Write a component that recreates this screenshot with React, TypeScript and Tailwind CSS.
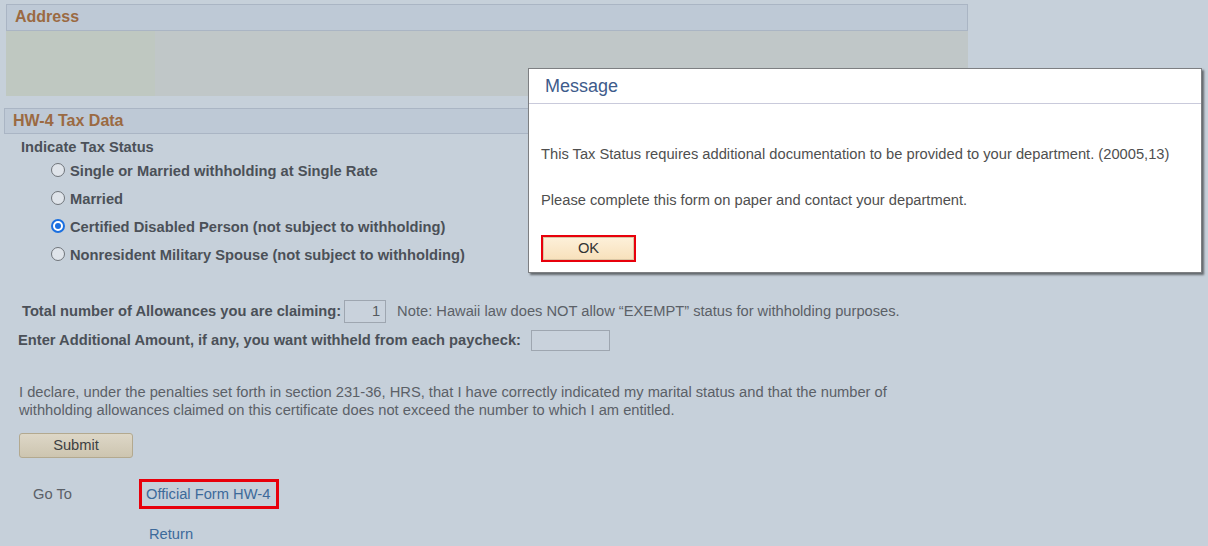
import React from "react";

const statuses = [
  { label: "Single or Married withholding at Single Rate", checked: false },
  { label: "Married", checked: false },
  { label: "Certified Disabled Person (not subject to withholding)", checked: true },
  { label: "Nonresident Military Spouse (not subject to withholding)", checked: false },
];

function Radio({ checked }: { checked: boolean }) {
  if (checked) {
    return (
      <span className="flex h-[14px] w-[14px] shrink-0 items-center justify-center rounded-full border-2 border-[#1a6fe0] bg-white">
        <span className="h-[6px] w-[6px] rounded-full bg-[#1a6fe0]" />
      </span>
    );
  }
  return <span className="block h-[14px] w-[14px] shrink-0 rounded-full border border-[#6f747a] bg-[#dfe4ea]" />;
}

export default function App() {
  return (
    <div className="relative h-[546px] w-[1208px] overflow-hidden bg-[#c6d0da] font-['Liberation_Sans',Arial,sans-serif] text-[14.7px] text-[#5b6067]">
      {/* Address section */}
      <div className="ml-[6px] w-[962px] pt-[4px]">
        <div className="h-[27px] border border-[#aab5c4] bg-[#bec9d6] px-[8px] text-[16px] font-bold leading-[24px] text-[#9b6a42]">
          Address
        </div>
        <div className="flex h-[65px] bg-[#c0c7c8]">
          <div className="w-[149px] bg-[#bfc8c1]" />
        </div>
      </div>

      {/* HW-4 Tax Data section */}
      <div className="ml-[4px] mt-[12px] h-[26px] w-[964px] border border-[#aab5c4] bg-[#bec9d6] px-[8px] text-[16px] font-bold leading-[23px] text-[#9b6a42]">
        HW-4 Tax Data
      </div>

      <div className="ml-[21px] mt-[4px] font-bold leading-[18px] text-[#4b5058]">Indicate Tax Status</div>
      <div className="ml-[51px] mt-[1px] flex flex-col">
        {statuses.map((s) => (
          <div key={s.label} className="flex h-[28px] items-center gap-[5px]">
            <span className="-mt-[3px] shrink-0">
              <Radio checked={s.checked} />
            </span>
            <span className="font-bold text-[#4b5058]">{s.label}</span>
          </div>
        ))}
      </div>

      <div className="ml-[22px] mt-[31px] flex h-[23px] items-center">
        <span className="font-bold text-[#4b5058]">Total number of Allowances you are claiming:</span>
        <div className="ml-[3px] h-[23px] w-[42px] border border-[#9ea6b0] bg-[#c9d2dc] pr-[5px] text-right leading-[21px] text-[#555a60]">
          1
        </div>
        <span className="ml-[11px]">Note: Hawaii law does NOT allow “EXEMPT” status for withholding purposes.</span>
      </div>

      <div className="ml-[18px] mt-[7px] flex h-[21px] items-center">
        <span className="font-bold text-[#4b5058]">Enter Additional Amount, if any, you want withheld from each paycheck:</span>
        <div className="ml-[10px] h-[21px] w-[79px] border border-[#9ea6b0] bg-[#c9d2dc]" />
      </div>

      <p className="ml-[19px] mt-[32px] w-[920px] leading-[18px]">
        I declare, under the penalties set forth in section 231-36, HRS, that I have correctly indicated my marital status and that the number of
        <br />
        withholding allowances claimed on this certificate does not exceed the number to which I am entitled.
      </p>

      <button className="ml-[19px] mt-[14px] h-[25px] w-[114px] rounded-[3px] border border-[#b3a98f] bg-gradient-to-b from-[#ddd7c7] to-[#cdc5b0] text-[14.7px] text-[#3d3f42]">
        Submit
      </button>

      <div className="ml-[33px] mt-[21px] flex h-[30px] items-center">
        <span className="w-[106px]">Go To</span>
        <a className="flex h-[30px] w-[140px] items-center border-[3px] border-[#e8000b] pl-[4px] text-[#3d6a9a]">
          Official Form HW-4
        </a>
      </div>
      <div className="ml-[149px] mt-[16px] leading-[18px] text-[#3d6a9a]">Return</div>

      {/* Message dialog */}
      <div className="absolute left-[528px] top-[68px] h-[205px] w-[674px] border border-[#7d7f82] bg-white shadow-[2px_2px_2px_rgba(0,0,0,0.5)]">
        <div className="h-[35px] border-b border-[#c9cadb] pl-[16px] text-[18px] leading-[34px] text-[#3e5b8b]">Message</div>
        <div className="pl-[12px] text-[#4f4f4f]">
          <p className="mt-[41px] leading-[18px]">
            This Tax Status requires additional documentation to be provided to your department. (20005,13)
          </p>
          <p className="mt-[28px] leading-[18px]">Please complete this form on paper and contact your department.</p>
          <div className="mt-[26px] h-[27px] w-[95px] border-2 border-[#e8000b]">
            <button className="h-full w-full border border-[#d9c6a4] bg-gradient-to-b from-[#fdf0d9] to-[#f8e1bc] text-[14.7px] leading-[21px] text-[#333]">
              OK
            </button>
          </div>
        </div>
      </div>
    </div>
  );
}
